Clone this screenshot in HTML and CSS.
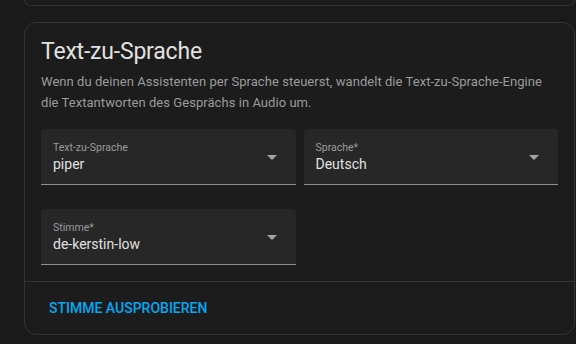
FILE: index.html
```html
<!DOCTYPE html>
<html lang="de">
<head>
    <meta charset="UTF-8">
    <meta name="viewport" content="width=device-width, initial-scale=1.0">
    <title>Sprachassistent – Text-zu-Sprache</title>
    <link rel="stylesheet" href="styles.css">
</head>
<body>

    <div class="page">
        <!-- vorherige Karte, nur der untere Rand ist sichtbar -->
        <div class="card card-prev"></div>

        <div class="card">
            <div class="card-content">
                <h1 class="card-title">Text-zu-Sprache</h1>
                <p class="description">Wenn du deinen Assistenten per Sprache steuerst, wandelt die Text-zu-Sprache-Engine die Textantworten des Gesprächs in Audio um.</p>

                <div class="fields">
                    <div class="select">
                        <div class="select-text">
                            <span class="select-label">Text-zu-Sprache</span>
                            <span class="select-value">piper</span>
                        </div>
                        <svg class="select-icon" viewBox="0 0 24 24"><path d="M7,10L12,15L17,10H7Z"/></svg>
                    </div>
                    <div class="select">
                        <div class="select-text">
                            <span class="select-label">Sprache*</span>
                            <span class="select-value">Deutsch</span>
                        </div>
                        <svg class="select-icon" viewBox="0 0 24 24"><path d="M7,10L12,15L17,10H7Z"/></svg>
                    </div>
                    <div class="select">
                        <div class="select-text">
                            <span class="select-label">Stimme*</span>
                            <span class="select-value">de-kerstin-low</span>
                        </div>
                        <svg class="select-icon" viewBox="0 0 24 24"><path d="M7,10L12,15L17,10H7Z"/></svg>
                    </div>
                </div>
            </div>

            <div class="card-actions">
                <button class="text-button">Stimme ausprobieren</button>
            </div>
        </div>
    </div>

</body>
</html>
```

FILE: styles.css
```css
body {
    margin: 0;
    padding: 0;
    background: #1a1a1a;
    font-family: 'Roboto', 'Noto Sans', sans-serif;
    color: #e1e1e1;
    overflow: hidden;
}

.page {
    padding-left: 24px;
    width: 551px;
}

.card {
    background: #1c1c1c;
    border: 1px solid #343434;
    border-radius: 12px;
}

/* nur die untere Kante der oberen Karte */
.card-prev {
    height: 5px;
    border-top: none;
    border-radius: 0 0 12px 12px;
    margin-bottom: 16px;
}

.card-content {
    padding: 13px 16px 16px;
}

.card-title {
    margin: 0;
    font-size: 23px;
    font-weight: 400;
    line-height: 32px;
    letter-spacing: -0.2px;
    color: #e1e1e1;
}

.description {
    margin: 3px 0 16px;
    font-size: 13px;
    line-height: 21px;
    letter-spacing: 0.05px;
    color: #9b9b9b;
}

.fields {
    display: grid;
    grid-template-columns: 1fr 1fr;
    column-gap: 8px;
    row-gap: 24px;
}

.select {
    display: flex;
    align-items: center;
    height: 56px;
    box-sizing: border-box;
    padding: 0 12px;
    background: #272727;
    border-radius: 4px 4px 0 0;
    border-bottom: 1px solid #8e8e8e;
}

.select-text {
    flex: 1;
    display: flex;
    flex-direction: column;
}

.select-label {
    font-size: 10.5px;
    line-height: 14px;
    color: #9b9b9b;
}

.select-value {
    font-size: 14px;
    line-height: 18px;
    color: #e1e1e1;
}

.select-icon {
    width: 24px;
    height: 24px;
    fill: #a5a5a5;
}

.card-actions {
    border-top: 1px solid #343434;
    padding: 8px;
}

.text-button {
    height: 36px;
    padding: 0 16px;
    border: none;
    background: none;
    font-family: inherit;
    font-size: 14px;
    font-weight: 500;
    text-transform: uppercase;
    color: #03a9f4;
    cursor: pointer;
}
```
